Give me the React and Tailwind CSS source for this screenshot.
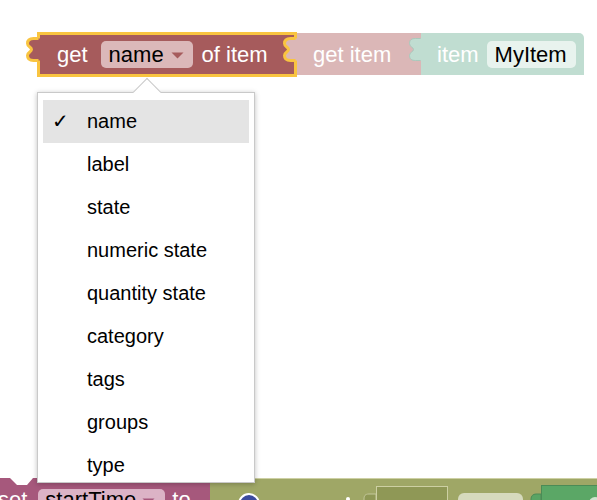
import React from "react";

const TAB_STROKE =
  "M12.5,2.5 H7.5 C3.5,2.5 1.5,4 1.5,7.5 C1.5,11 5.5,11 5.5,13.5 C5.5,16 1.5,16 1.5,19.5 C1.5,23 3.5,24.5 7.5,24.5 H12.5";
const TAB_FILL = TAB_STROKE + " H16 V2.5 Z";

function Tab({ className, fill, stroke, strokeWidth = 3 }) {
  return (
    <svg className={className} width="17" height="27" viewBox="0 0 17 27">
      <path d={TAB_FILL} fill={fill} />
      {stroke && (
        <path d={TAB_STROKE} fill="none" stroke={stroke} strokeWidth={strokeWidth} />
      )}
    </svg>
  );
}

const OPTIONS = [
  "name",
  "label",
  "state",
  "numeric state",
  "quantity state",
  "category",
  "tags",
  "groups",
  "type",
];

function Caret({ color }) {
  return (
    <svg width="13" height="7" viewBox="0 0 13 7" className="shrink-0">
      <path d="M0.5,0.5 H12.5 L6.5,6.5 Z" fill={color} />
    </svg>
  );
}

export default function App() {
  return (
    <div className="relative h-[500px] w-[597px] overflow-hidden bg-white font-['Liberation_Sans',Arial,sans-serif]">
      {/* main selected block: get [name] of item */}
      <div className="absolute left-[37px] top-[32px] flex h-[45px] w-[260px] items-center border-[3px] border-[#f9c440] bg-[#a65b5c] text-[22px] leading-[25px] text-white">
        <Tab className="absolute left-[-14px] top-[1px]" fill="#a65b5c" stroke="#f9c440" />
        <span className="ml-[17px]">get</span>
        <div className="ml-[13px] flex h-[27px] w-[92px] items-center rounded-[5px] bg-[#dbb8b9] pl-[8px] text-black">
          <span>name</span>
          <span className="ml-[7px] mt-[1px] flex">
            <Caret color="#a65b5c" />
          </span>
        </div>
        <span className="ml-[9px]">of item</span>
      </div>

      {/* get item block */}
      <div className="absolute left-[297px] top-[33px] flex h-[42px] w-[124px] items-center bg-[#dbb7b7] pl-[16px] text-[22px] leading-[25px] text-white">
        get item
      </div>

      {/* notch of the main block holding get item's tab */}
      <Tab className="absolute left-[283px] top-[36px]" fill="#dbb7b7" stroke="#f9c440" />

      {/* item MyItem block */}
      <div className="absolute left-[421px] top-[33px] flex h-[42px] w-[163px] items-center rounded-tr-[5px] bg-[#c0ddd1] pl-[16px] text-[22px] leading-[25px] text-white">
        <span>item</span>
        <div className="ml-[8px] flex h-[27px] w-[89px] items-center rounded-[5px] bg-[#e8f3ee] pl-[8px] text-black">
          MyItem
        </div>
      </div>
      <Tab className="absolute left-[408px] top-[36px]" fill="#c0ddd1" stroke="#a9c9bc" strokeWidth={1} />

      {/* bottom blocks */}
      <div className="absolute left-0 top-[478px] flex h-[30px] w-[597px] items-start text-[22px] leading-[25px]">
        <div className="relative flex h-full w-[210px] items-start bg-[#a6587c] text-white">
          <svg className="absolute left-0 top-0" width="40" height="8" viewBox="0 0 40 8">
            <path d="M10,0 L17,7 H27 L33,0 Z" fill="#ffffff" />
          </svg>
          <span className="ml-[-2px] mt-[9px]">set</span>
          <div className="ml-[11px] mt-[11px] flex h-[27px] w-[127px] items-start rounded-[5px] bg-[#dcb3c6] pl-[7px] text-black">
            <span className="mt-[-2px]">startTime</span>
            <span className="ml-[6px] mt-[9px] flex">
              <Caret color="#a6587c" />
            </span>
          </div>
          <span className="ml-[7px] mt-[9px]">to</span>
        </div>
        <div className="flex h-full flex-1 items-start border-t border-[#cdd0a4] bg-[#9fa766]">
          <div className="ml-[28px] mt-[14px] h-[22px] w-[22px] shrink-0 rounded-full border-2 border-white bg-[#3b4b9e]" />
          <div className="ml-[86px] mt-[18px] h-[4px] w-[4px] shrink-0 rounded-full bg-white" />
          <svg className="ml-[12px] mt-[14px] shrink-0" width="14" height="12" viewBox="0 0 14 12">
            <path d="M14,1 H7 C3,1 2,3 2,6 V12 H14 Z" fill="#8f9856" stroke="#c3c79a" strokeWidth="1" />
          </svg>
          <div className="mt-[7px] h-[20px] w-[72px] shrink-0 border border-[#cdd0a3] bg-[#8f9856]" />
          <div className="ml-[10px] mt-[14px] h-[14px] w-[65px] shrink-0 rounded-t-[6px] bg-[#d6dabd]" />
          <svg className="ml-[7px] mt-[14px] shrink-0" width="11" height="12" viewBox="0 0 11 12">
            <path d="M11,1 H6 C3,1 1,3 1,6 V12 H11 Z" fill="#5aa464" stroke="#4c8b56" strokeWidth="1" />
          </svg>
          <div className="relative mt-[6px] h-[20px] flex-1 border-l border-t border-[#4c8b56] bg-[#5ba766]">
            <div className="absolute left-[47px] top-[11px] h-[12px] w-[12px] rounded-full bg-[#cfe4cf]" />
          </div>
        </div>
      </div>

      {/* dropdown */}
      <div className="absolute left-[37px] top-[92px] h-[391px] w-[218px] overflow-hidden border border-[#c9c9c9] bg-white px-[5px] pt-[7px] text-[20px] leading-[23px] text-black shadow-[0_1px_5px_rgba(0,0,0,0.25)]">
        {OPTIONS.map((o, i) => (
          <div
            key={o}
            className={
              i === 0
                ? "flex h-[43px] items-center bg-[#e4e4e4]"
                : "flex h-[43px] items-center"
            }
          >
            <span className="w-[44px] shrink-0 pl-[9px] font-['DejaVu_Sans',sans-serif] text-[20px]">
              {i === 0 ? "✓" : ""}
            </span>
            <span>{o}</span>
          </div>
        ))}
      </div>
      <div className="absolute left-[132px] top-[76px] h-[17px] w-[30px] overflow-hidden">
        <div className="absolute left-[5px] top-[6px] h-[20px] w-[20px] rotate-45 border-l border-t border-[#c9c9c9] bg-white" />
      </div>
    </div>
  );
}
